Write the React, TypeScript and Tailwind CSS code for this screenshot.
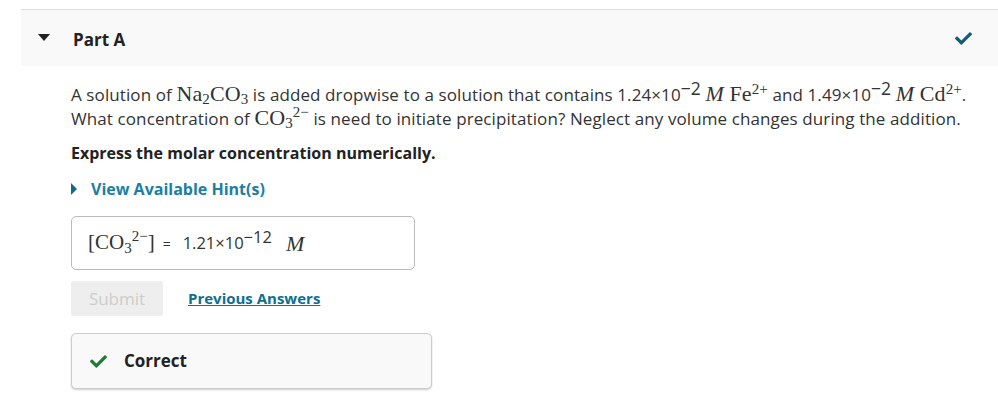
import React from "react";

function Check({ className }: { className?: string }) {
  return (
    <svg viewBox="0 0 512 512" className={className} fill="currentColor">
      <path d="M173.9 439.4l-166.4-166.4c-10-10-10-26.2 0-36.2l36.2-36.2c10-10 26.2-10 36.2 0L192 312.7 432.1 72.6c10-10 26.2-10 36.2 0l36.2 36.2c10 10 10 26.2 0 36.2l-294.4 294.4c-10 10-26.2 10-36.2 0z" />
    </svg>
  );
}

const M = ({ children }: { children: React.ReactNode }) => (
  <span className="font-['Liberation_Serif',serif] text-[22px] leading-none">{children}</span>
);

export default function App() {
  return (
    <div className="w-[998px] h-[409px] bg-white text-[#333] font-['Open_Sans','Noto_Sans',sans-serif] pt-[9px]">
      <div className="ml-[21px] border-t border-[#dddddd] bg-[#f9f9f9] h-[57px] flex items-center">
        <div className="ml-[17px] -mt-[1px] w-0 h-0 border-l-[6.5px] border-r-[6.5px] border-t-[7px] border-l-transparent border-r-transparent border-t-[#222]" />
        <span className="ml-[23px] text-[17px] font-bold text-[#222] mt-[4px]">Part A</span>
        <div className="flex-1" />
        <Check className="w-[17px] h-[17px] text-[#135d79] mr-[26px]" />
      </div>

      <div className="pl-[71px] pt-[17px]">
        <p className="text-[17px] tracking-[0.1px] leading-[24px] text-[#333] whitespace-nowrap">
          A solution of <M>Na<sub className="text-[15px] align-baseline relative top-[3px]">2</sub>CO<sub className="text-[15px] align-baseline relative top-[3px]">3</sub></M> is added dropwise to a solution that contains 1.24×10<sup className="text-[17.5px] relative -top-[6px] align-baseline">−2</sup> <M><i>M</i> Fe<sup className="text-[15px] align-baseline relative -top-[7px]">2+</sup></M> and 1.49×10<sup className="text-[17.5px] relative -top-[6px] align-baseline">−2</sup> <M><i>M</i> Cd<sup className="text-[15px] align-baseline relative -top-[7px]">2+</sup></M>.
          <br />
          What concentration of <M>CO<sub className="text-[15px] align-baseline relative top-[3px]">3</sub><sup className="text-[15px] align-baseline relative -top-[8px]">2−</sup></M> is need to initiate precipitation? Neglect any volume changes during the addition.
        </p>
        <p className="mt-[10px] text-[16px] font-bold text-[#222] leading-[24px]">Express the molar concentration numerically.</p>
        <div className="mt-[12px] flex items-center">
          <div className="w-0 h-0 border-t-[6px] border-b-[6px] border-l-[6px] border-t-transparent border-b-transparent border-l-[#0e6d8f]" />
          <span className="ml-[14px] text-[16px] font-bold text-[#1b7ea3]">View Available Hint(s)</span>
        </div>

        <div className="mt-[15px] w-[344px] h-[54px] border border-[#bbbbbb] rounded-[5px] flex items-center pl-[16px]">
          <span className="font-['Liberation_Serif',serif] text-[21px] text-[#333]">
            [CO<sub className="text-[15px] align-baseline relative top-[4px]">3</sub><sup className="text-[15px] align-baseline relative -top-[8px]">2−</sup>]
          </span>
          <span className="ml-[8px] text-[14px] text-[#333]">=</span>
          <span className="ml-[12px] text-[16.5px] text-[#333]">1.21×10<sup className="text-[16.5px] relative -top-[6px] align-baseline">−12</sup></span>
          <span className="ml-[14px] font-['Liberation_Serif',serif] italic text-[22px] text-[#333]">M</span>
        </div>

        <div className="mt-[11px] flex items-center">
          <div className="w-[92px] h-[35px] bg-[#eeeeee] rounded-[2px] flex items-center justify-center text-[17px] text-[#cccccc]">Submit</div>
          <span className="ml-[25px] text-[15px] font-bold text-[#0d6f91] underline">Previous Answers</span>
        </div>

        <div className="mt-[17px] w-[361px] h-[56px] bg-[#f9f9f9] border border-[#cccccc] rounded-[5px] shadow-[0_1px_2px_rgba(0,0,0,0.2)] flex items-center pl-[18px]">
          <Check className="w-[17px] h-[17px] text-[#1e7d34]" />
          <span className="ml-[17px] text-[17px] font-bold text-[#222]">Correct</span>
        </div>
      </div>
    </div>
  );
}
